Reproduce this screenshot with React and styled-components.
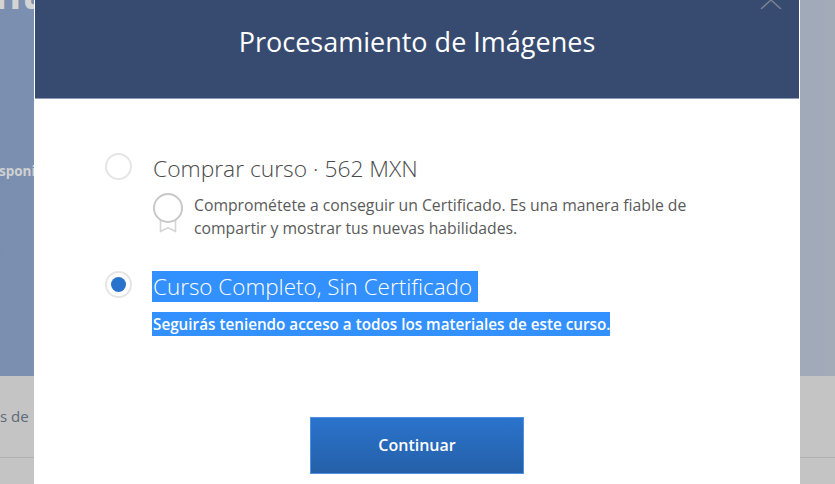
import React from 'react'
import styled, { createGlobalStyle } from 'styled-components'

const GlobalStyle = createGlobalStyle`
    html, body {
        margin: 0;
        padding: 0;
        overflow: hidden;
        font-family: "Open Sans", "Liberation Sans", sans-serif;
    }
`

const Page = styled.div`
    position: relative;
    width: 835px;
    height: 484px;
    overflow: hidden;
    background: #c4c4c4;
`
const Hero = styled.section`
    height: 376px;
    background: linear-gradient(90deg, #7a8fb0 0%, #a3abb9 100%);
    color: #d4d4d4;
    overflow: hidden;
`
const HeroTitle = styled.h1`
    margin: -28px 0 0 -5px;
    font-size: 40px;
    line-height: 44px;
    font-weight: 700;
`
const HeroText = styled.p`
    margin: 145px 0 0 -1px;
    font-size: 13.5px;
    line-height: 20px;
    font-weight: 700;
    color: #d0d0d0;
`
const Band = styled.section`
    height: 82px;
    border-bottom: 1px solid #b0b0b0;
    padding: 30px 0 0 0;
    box-sizing: border-box;
    font-size: 15px;
    line-height: 20px;
    color: #5e6a7a;
`
const Modal = styled.div`
    position: absolute;
    top: 0;
    left: 34px;
    width: 764px;
    height: 484px;
    border-left: 1px solid rgba(255, 255, 255, 0.45);
    border-right: 1px solid rgba(255, 255, 255, 0.45);
    background: #fff;
    display: flex;
    flex-direction: column;
`
const Header = styled.header`
    position: relative;
    height: 99px;
    border-bottom: 1px solid #8e9cb6;
    background: #374a70;
    display: flex;
    align-items: center;
    justify-content: center;
    padding-bottom: 14px;
    box-sizing: border-box;
    flex: none;
`
const Title = styled.h2`
    margin: 0;
    font-size: 27px;
    line-height: 36px;
    font-weight: 400;
    color: #fff;
`
const Close = styled.svg`
    position: absolute;
    top: -9px;
    right: 17px;
    width: 22px;
    height: 18px;
`
const Body = styled.div`
    flex: 1;
    padding: 54px 0 0 70px;
    display: flex;
    flex-direction: column;
`
const Option = styled.div`
    display: flex;
    gap: 20px;
    margin-bottom: ${p => p.$gap || 0}px;
`
const Radio = styled.span`
    flex: none;
    width: 27px;
    height: 27px;
    border-radius: 50%;
    border: 2px solid #e5e5e5;
    box-sizing: border-box;
    display: flex;
    align-items: center;
    justify-content: center;
    &::after {
        content: '';
        width: 15px;
        height: 15px;
        border-radius: 50%;
        background: ${p => (p.$checked ? '#2a73cc' : 'transparent')};
    }
`
const OptionBody = styled.div`
    display: flex;
    flex-direction: column;
    align-items: flex-start;
`
const OptionTitle = styled.div`
    padding-left: 1px;
    font-size: 22.8px;
    line-height: 31px;
    font-weight: 300;
    color: #4a4a4a;
    ${p => p.$selected && `
        font-size: 22.45px;
        background: #3390ff;
        color: #fff;
        padding-right: 6px;
    `}
`
const Note = styled.div`
    display: flex;
    gap: 11px;
    margin: 9px 0 0 1px;
`
const NoteText = styled.p`
    margin: 1px 0 0;
    width: 510px;
    font-size: 15.75px;
    line-height: 23px;
    color: #5a5a5a;
`
const SelectedText = styled.p`
    margin: 10px 0 0;
    padding-left: 1px;
    font-size: 15.25px;
    line-height: 24px;
    font-weight: 600;
    color: #fff;
    background: #3390ff;
`
const Footer = styled.div`
    display: flex;
    justify-content: center;
    margin: 81px 0 0 -70px;
`
const Button = styled.button`
    width: 214px;
    height: 57px;
    border: 1px solid #4f91e2;
    padding: 0 0 2px;
    background: linear-gradient(180deg, #2a73cc 0%, #2560a8 100%);
    color: #fff;
    font-family: inherit;
    font-size: 16px;
    font-weight: 600;
`

const Ribbon = () => (
    <svg width="30" height="41" viewBox="0 0 30 41" fill="none" style={{ flex: 'none' }}>
        <path d="M7.5 26V38.5L15 34.5L22.5 38.5V26" stroke="#d4d4d4" strokeWidth="1.5" />
        <circle cx="15" cy="15" r="14" fill="#fff" stroke="#c8c8c8" strokeWidth="2" />
    </svg>
)

const App = () => {
    return (
        <Page>
            <GlobalStyle />
            <Hero>
                <HeroTitle>nt</HeroTitle>
                <HeroText>sponi</HeroText>
            </Hero>
            <Band>s de</Band>
            <Modal>
                <Header>
                    <Title>Procesamiento de Imágenes</Title>
                    <Close viewBox="0 0 22 18" fill="none">
                        <path d="M1 18L11 9L21 18" stroke="#7c8291" strokeWidth="1.5" />
                    </Close>
                </Header>
                <Body>
                    <Option $gap={31}>
                        <Radio />
                        <OptionBody>
                            <OptionTitle>Comprar curso · 562 MXN</OptionTitle>
                            <Note>
                                <Ribbon />
                                <NoteText>
                                    Comprométete a conseguir un Certificado. Es una manera fiable de compartir y mostrar tus nuevas habilidades.
                                </NoteText>
                            </Note>
                        </OptionBody>
                    </Option>
                    <Option>
                        <Radio $checked />
                        <OptionBody>
                            <OptionTitle $selected>Curso Completo, Sin Certificado</OptionTitle>
                            <SelectedText>Seguirás teniendo acceso a todos los materiales de este curso.</SelectedText>
                        </OptionBody>
                    </Option>
                    <Footer>
                        <Button>Continuar</Button>
                    </Footer>
                </Body>
            </Modal>
        </Page>
    )
}

export default App
